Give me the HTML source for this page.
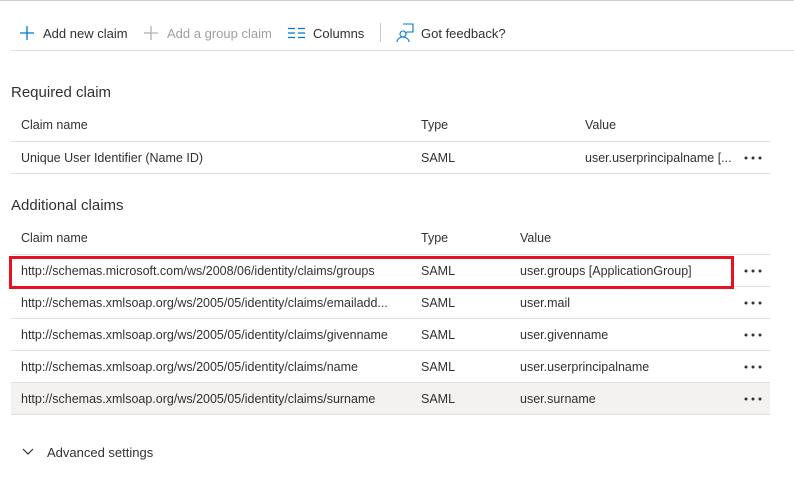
<!DOCTYPE html>
<html><head><meta charset="utf-8"><style>
*{margin:0;padding:0;box-sizing:border-box}
body{width:794px;height:482px;background:#fff;font-family:"Liberation Sans",sans-serif;color:#323130;position:relative;overflow:hidden;font-size:12.5px}
.a{position:absolute;white-space:nowrap}
.line{position:absolute;height:1px;background:#e1dfdd}
.h{font-size:15px}
.dots{position:absolute;width:18px;height:4px}
</style></head><body>
<div class="line" style="top:0;left:0;width:794px;background:#c8d0dc"></div>
<svg class="a" style="left:19px;top:25px" width="16" height="16"><path d="M8 1v14M1 8h14" stroke="#0078d4" stroke-width="1.3"/></svg>
<div class="a" style="left:43px;top:26px;font-size:13px">Add new claim</div>
<svg class="a" style="left:143px;top:25px" width="16" height="16"><path d="M8 1v14M1 8h14" stroke="#b0b0b0" stroke-width="1.3"/></svg>
<div class="a" style="left:167px;top:26px;font-size:13px;color:#a19f9d">Add a group claim</div>
<svg class="a" style="left:288px;top:27px" width="17" height="12"><path d="M0 1.5h7M10 1.5h7M0 6h7M10 6h7M0 10.5h7M10 10.5h7" stroke="#0078d4" stroke-width="1.3"/></svg>
<div class="a" style="left:313px;top:26px;font-size:13px">Columns</div>
<div class="a" style="left:380px;top:23px;width:1px;height:19px;background:#c8c6c4"></div>
<svg class="a" style="left:396px;top:23px" width="18" height="20"><path d="M7 1h10v8h-6l-2 2" fill="none" stroke="#0078d4" stroke-width="1.1"/><circle cx="7" cy="11" r="3" fill="#fff" stroke="#0078d4" stroke-width="1.1"/><path d="M1 19c0-3 3-5 6-5s6 2 6 5" fill="none" stroke="#0078d4" stroke-width="1.1"/></svg>
<div class="a" style="left:421px;top:26px;font-size:13px">Got feedback?</div>
<div class="line" style="top:50px;left:11px;width:783px"></div>

<div class="a h" style="left:11px;top:84px">Required claim</div>
<div class="a" style="left:21px;top:118px">Claim name</div>
<div class="a" style="left:421px;top:118px">Type</div>
<div class="a" style="left:585px;top:118px">Value</div>
<div class="line" style="top:141px;left:11px;width:759px"></div>
<div class="a" style="left:21px;top:151px">Unique User Identifier (Name ID)</div>
<div class="a" style="left:421px;top:151px">SAML</div>
<div class="a" style="left:585px;top:151px">user.userprincipalname [...</div>
<svg class="dots" style="left:744px;top:156px"><circle cx="2" cy="2" r="1.5" fill="#323130"/><circle cx="9" cy="2" r="1.5" fill="#323130"/><circle cx="16" cy="2" r="1.5" fill="#323130"/></svg>
<div class="line" style="top:173px;left:11px;width:759px"></div>

<div class="a h" style="left:11px;top:197px">Additional claims</div>
<div class="a" style="left:21px;top:231px">Claim name</div>
<div class="a" style="left:421px;top:231px">Type</div>
<div class="a" style="left:520px;top:231px">Value</div>
<div class="line" style="top:254px;left:11px;width:759px"></div>

<div class="a" style="left:21px;top:264px">http://schemas.microsoft.com/ws/2008/06/identity/claims/groups</div>
<div class="a" style="left:421px;top:264px">SAML</div>
<div class="a" style="left:520px;top:264px">user.groups [ApplicationGroup]</div>
<svg class="dots" style="left:744px;top:269px"><circle cx="2" cy="2" r="1.5" fill="#323130"/><circle cx="9" cy="2" r="1.5" fill="#323130"/><circle cx="16" cy="2" r="1.5" fill="#323130"/></svg>
<div class="line" style="top:286px;left:11px;width:759px"></div>

<div class="a" style="left:21px;top:296px">http://schemas.xmlsoap.org/ws/2005/05/identity/claims/emailadd...</div>
<div class="a" style="left:421px;top:296px">SAML</div>
<div class="a" style="left:520px;top:296px">user.mail</div>
<svg class="dots" style="left:744px;top:301px"><circle cx="2" cy="2" r="1.5" fill="#323130"/><circle cx="9" cy="2" r="1.5" fill="#323130"/><circle cx="16" cy="2" r="1.5" fill="#323130"/></svg>
<div class="line" style="top:318px;left:11px;width:759px"></div>

<div class="a" style="left:21px;top:328px">http://schemas.xmlsoap.org/ws/2005/05/identity/claims/givenname</div>
<div class="a" style="left:421px;top:328px">SAML</div>
<div class="a" style="left:520px;top:328px">user.givenname</div>
<svg class="dots" style="left:744px;top:333px"><circle cx="2" cy="2" r="1.5" fill="#323130"/><circle cx="9" cy="2" r="1.5" fill="#323130"/><circle cx="16" cy="2" r="1.5" fill="#323130"/></svg>
<div class="line" style="top:350px;left:11px;width:759px"></div>

<div class="a" style="left:21px;top:360px">http://schemas.xmlsoap.org/ws/2005/05/identity/claims/name</div>
<div class="a" style="left:421px;top:360px">SAML</div>
<div class="a" style="left:520px;top:360px">user.userprincipalname</div>
<svg class="dots" style="left:744px;top:365px"><circle cx="2" cy="2" r="1.5" fill="#323130"/><circle cx="9" cy="2" r="1.5" fill="#323130"/><circle cx="16" cy="2" r="1.5" fill="#323130"/></svg>
<div class="line" style="top:382px;left:11px;width:759px"></div>

<div class="a" style="left:11px;top:383px;width:759px;height:31px;background:#f3f2f1"></div>
<div class="a" style="left:21px;top:392px">http://schemas.xmlsoap.org/ws/2005/05/identity/claims/surname</div>
<div class="a" style="left:421px;top:392px">SAML</div>
<div class="a" style="left:520px;top:392px">user.surname</div>
<svg class="dots" style="left:744px;top:397px"><circle cx="2" cy="2" r="1.5" fill="#323130"/><circle cx="9" cy="2" r="1.5" fill="#323130"/><circle cx="16" cy="2" r="1.5" fill="#323130"/></svg>
<div class="line" style="top:414px;left:11px;width:759px"></div>

<div class="a" style="left:9px;top:256px;width:725px;height:33px;border:3px solid #e81123"></div>

<svg class="a" style="left:22px;top:448px" width="12" height="8"><path d="M1 1l5 5 5-5" fill="none" stroke="#323130" stroke-width="1.2"/></svg>
<div class="a" style="left:47px;top:445px;font-size:13px">Advanced settings</div>
</body></html>
